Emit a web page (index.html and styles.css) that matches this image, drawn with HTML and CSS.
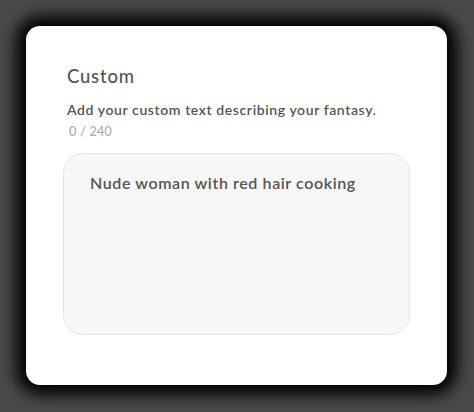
FILE: index.html
```html
<!DOCTYPE html>
<html>
<head>
<meta charset="utf-8">
<link rel="stylesheet" href="styles.css">
</head>
<body>
<div class="card">
  <h2 class="title">Custom</h2>
  <p class="desc">Add your custom text describing your fantasy.</p>
  <div class="count">0 / 240</div>
  <div class="input">Nude woman with red hair cooking</div>
</div>
</body>
</html>
```

FILE: styles.css
```css
html, body {
  margin: 0;
  padding: 0;
}
body {
  width: 474px;
  height: 412px;
  box-sizing: border-box;
  padding: 26px 27px 27px 26px;
  background: #4a4a4a;
  font-family: "Lato", "Open Sans", sans-serif;
  overflow: hidden;
}
.card {
  width: 421px;
  height: 359px;
  box-sizing: border-box;
  background: #fff;
  border-radius: 14px;
  box-shadow: 0 0 16px 10px #000;
  padding: 39px 37px 0 37px;
  color: #555;
}
.title {
  margin: 0 0 0 4px;
  font-size: 18.5px;
  line-height: 22px;
  font-weight: 500;
  letter-spacing: 0.8px;
  color: #555;
}
.desc {
  margin: 14px 0 0 4px;
  font-size: 14px;
  line-height: 18px;
  font-weight: 600;
  letter-spacing: 0.6px;
  color: #555;
}
.count {
  margin: 5px 0 0 6px;
  font-size: 12.5px;
  line-height: 16px;
  color: #a5a5a5;
  letter-spacing: 0.3px;
}
.input {
  margin-top: 13px;
  height: 182px;
  box-sizing: border-box;
  background: #f7f7f7;
  border: 1px solid #e4e4e4;
  border-radius: 20px;
  padding: 19px 26px;
  font-size: 16px;
  line-height: 20px;
  font-weight: 600;
  letter-spacing: 0.6px;
  color: #555;
}
```
